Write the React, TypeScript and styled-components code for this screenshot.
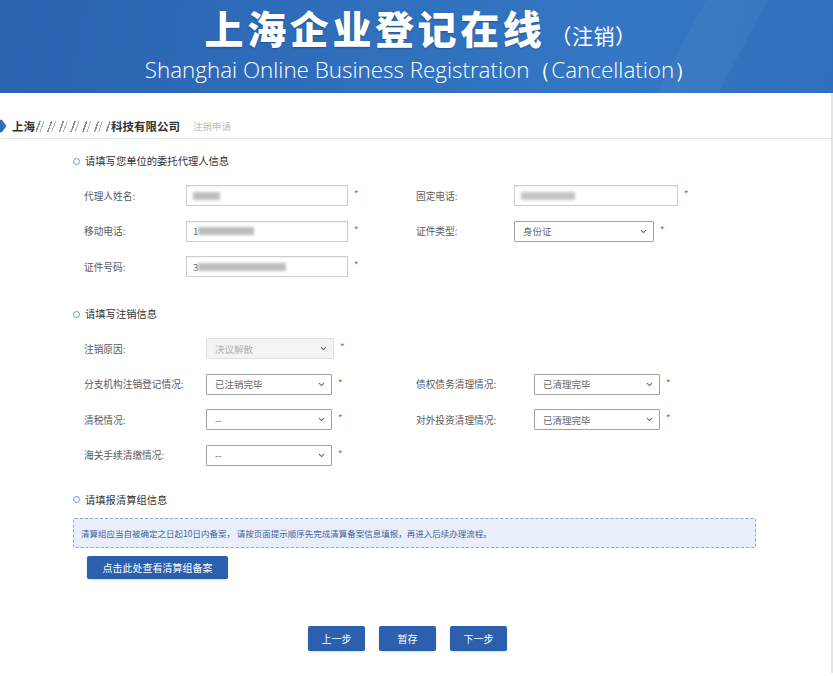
import styled, { createGlobalStyle } from 'styled-components';

const GlobalStyle = createGlobalStyle`
  html, body {
    margin: 0;
    padding: 0;
    background: #ffffff;
  }
  body {
    font-family: "Noto Sans CJK SC", "Noto Sans", "Liberation Sans", sans-serif;
    color: #555;
  }
`;

const Page = styled.div`
  width: 833px;
  min-height: 676px;
  box-sizing: border-box;
`;

const Header = styled.header`
  height: 93px;
  box-sizing: border-box;
  padding: 2px 0 0 8px;
  display: flex;
  flex-direction: column;
  align-items: center;
  color: #fff;
  background:
    linear-gradient(118deg, transparent 0 80%, rgba(255, 255, 255, 0.035) 80% 87%, transparent 87%),
    linear-gradient(100deg, #2a62b0 0%, #3070bd 45%, #3477c4 75%, #2f6fbc 100%);
`;

const TitleLine = styled.div`
  display: flex;
  align-items: baseline;
  line-height: 50px;
`;

const Title = styled.h1`
  margin: 0;
  font-size: 39px;
  font-weight: 900;
  letter-spacing: 3.6px;
  text-shadow: 0 1px 2px rgba(0, 0, 0, 0.25);
`;

const TitleNote = styled.span`
  margin-left: 5px;
  font-size: 21px;
  letter-spacing: 0.5px;
`;

const Subtitle = styled.div`
  font-family: "Open Sans", "Noto Sans", sans-serif;
  font-weight: 300;
  font-size: 22.4px;
  line-height: 30px;
  margin-top: -5px;
`;

const Body = styled.div`
  border-right: 2px solid #e4e4e4;
  padding-bottom: 22px;
`;

const Crumbs = styled.nav`
  height: 46px;
  box-sizing: border-box;
  border-bottom: 1px solid #e3e3e3;
  padding-top: 21px;
  display: flex;
  align-items: center;
  line-height: 14px;
`;

const CrumbMark = styled.svg`
  width: 7px;
  height: 14px;
  margin-right: 5px;
  flex: none;
`;

const Company = styled.span`
  display: flex;
  align-items: center;
  font-size: 11.5px;
  font-weight: 700;
  color: #333;
`;

/* the company name is masked in the screenshot: a smear of grey slashes */
const Smudge = styled.span`
  display: inline-block;
  width: 74px;
  height: 11px;
  margin: 0 1px;
  background: repeating-linear-gradient(
    110deg,
    transparent 0 3px,
    #8f8f8f 3px 4.5px,
    transparent 4.5px 7px,
    #b5b5b5 7px 8px,
    transparent 8px 11px
  );
  filter: blur(0.7px);
`;

const CrumbCurrent = styled.span`
  margin-left: 13px;
  font-size: 9.5px;
  color: #bdbdbd;
`;

const Section = styled.section<{ $top: number }>`
  margin-top: ${(p) => p.$top}px;
`;

const SectionTitle = styled.h3`
  margin: 0;
  padding-left: 73px;
  display: flex;
  align-items: center;
  gap: 5px;
  font-size: 10.3px;
  line-height: 14px;
  font-weight: 400;
  color: #333;
`;

const Dot = styled.span`
  width: 5px;
  height: 5px;
  border: 1px solid #6b96d6;
  border-radius: 50%;
`;

const Rows = styled.div`
  display: grid;
  row-gap: 14.5px;
  margin-top: 17px;
  padding-left: 84px;
`;

const Row = styled.div`
  display: flex;
  height: 21px;
`;

const Cell = styled.div<{ $w?: number }>`
  display: flex;
  align-items: center;
  flex: none;
  width: ${(p) => (p.$w ? `${p.$w}px` : 'auto')};
`;

const Label = styled.span<{ $w: number }>`
  width: ${(p) => p.$w}px;
  flex: none;
  font-size: 9.7px;
  color: #5a5a5a;
  white-space: nowrap;
`;

const TextBox = styled.div<{ $w: number }>`
  width: ${(p) => p.$w}px;
  height: 21px;
  box-sizing: border-box;
  border: 1px solid #cdcdcd;
  box-shadow: inset 0 1px 1px rgba(0, 0, 0, 0.05);
  display: flex;
  align-items: center;
  padding: 0 6px;
  font-size: 9.5px;
  color: #666;
`;

const SelectBox = styled.div<{ $w: number; $disabled?: boolean }>`
  width: ${(p) => p.$w}px;
  height: 21px;
  box-sizing: border-box;
  border: 1px solid ${(p) => (p.$disabled ? '#e1e1e1' : '#a2a2a2')};
  background: ${(p) => (p.$disabled ? '#f3f3f3' : '#fff')};
  color: ${(p) => (p.$disabled ? '#b0b0b0' : '#666')};
  border-radius: 1px;
  display: flex;
  align-items: center;
  justify-content: space-between;
  padding: 0 6px 0 8px;
  font-size: 9.5px;
`;

const Chevron = styled.svg`
  width: 7px;
  height: 5px;
`;

const Blur = styled.span<{ $w: number; $tone?: string }>`
  display: inline-block;
  width: ${(p) => p.$w}px;
  height: 8px;
  background: ${(p) => p.$tone ?? '#bdbdbd'};
  filter: blur(1.4px);
`;

const Star = styled.span`
  margin-left: 6px;
  font-size: 10px;
  color: #e24b45;
  align-self: flex-start;
  line-height: 18px;
`;

const Notice = styled.div`
  margin: 11px 75px 0 73px;
  height: 30px;
  box-sizing: border-box;
  border: 1px dashed #95a4c6;
  border-radius: 2px;
  background: #e9effa;
  display: flex;
  align-items: center;
  padding: 0 7px;
  font-size: 8.5px;
  color: #3f5f9c;
  white-space: nowrap;
`;

const BlueButton = styled.button<{ $w: number; $h: number }>`
  width: ${(p) => p.$w}px;
  height: ${(p) => p.$h}px;
  border: none;
  border-radius: 2px;
  background: #2c5fae;
  color: #fff;
  font-family: inherit;
  font-size: 10px;
  padding: 0;
  box-shadow: 0 1px 2px rgba(0, 0, 0, 0.15);
`;

const ArchiveButton = styled(BlueButton)`
  margin: 8px 0 0 87px;
  display: block;
`;

const Footer = styled.div`
  margin-top: 47px;
  padding-right: 16px;
  display: flex;
  justify-content: center;
  gap: 14px;
`;

function Arrow() {
  return (
    <Chevron viewBox="0 0 7 5">
      <path d="M1 1.2 L3.5 3.6 L6 1.2" fill="none" stroke="#666" strokeWidth="1.1" />
    </Chevron>
  );
}

function Select({ w, value, disabled }: { w: number; value: string; disabled?: boolean }) {
  return (
    <SelectBox $w={w} $disabled={disabled}>
      <span>{value}</span>
      <Arrow />
    </SelectBox>
  );
}

export default function App() {
  return (
    <Page>
      <GlobalStyle />
      <Header>
        <TitleLine>
          <Title>上海企业登记在线</Title>
          <TitleNote>（注销）</TitleNote>
        </TitleLine>
        <Subtitle>Shanghai Online Business Registration（Cancellation）</Subtitle>
      </Header>

      <Body>
        <Crumbs>
          <CrumbMark viewBox="0 0 7 14">
            <path d="M0 1 Q1 0 2 1 L6.5 7 L2 13 Q1 14 0 13 Z" fill="#2f6cc0" />
          </CrumbMark>
          <Company>
            <span>上海</span>
            <Smudge />
            <span>科技有限公司</span>
          </Company>
          <CrumbCurrent>注销申请</CrumbCurrent>
        </Crumbs>

        <Section $top={15}>
          <SectionTitle>
            <Dot />
            请填写您单位的委托代理人信息
          </SectionTitle>
          <Rows>
            <Row>
              <Cell $w={332}>
                <Label $w={102}>代理人姓名:</Label>
                <TextBox $w={162}>
                  <Blur $w={27} />
                </TextBox>
                <Star>*</Star>
              </Cell>
              <Cell>
                <Label $w={98}>固定电话:</Label>
                <TextBox $w={164}>
                  <Blur $w={54} $tone="#c4c4c4" />
                </TextBox>
                <Star>*</Star>
              </Cell>
            </Row>
            <Row>
              <Cell $w={332}>
                <Label $w={102}>移动电话:</Label>
                <TextBox $w={162}>
                  1<Blur $w={56} />
                </TextBox>
                <Star>*</Star>
              </Cell>
              <Cell>
                <Label $w={98}>证件类型:</Label>
                <Select w={140} value="身份证" />
                <Star>*</Star>
              </Cell>
            </Row>
            <Row>
              <Cell $w={332}>
                <Label $w={102}>证件号码:</Label>
                <TextBox $w={162}>
                  3<Blur $w={88} />
                </TextBox>
                <Star>*</Star>
              </Cell>
            </Row>
          </Rows>
        </Section>

        <Section $top={30}>
          <SectionTitle>
            <Dot />
            请填写注销信息
          </SectionTitle>
          <Rows>
            <Row>
              <Cell $w={332}>
                <Label $w={122}>注销原因:</Label>
                <Select w={128} value="决议解散" disabled />
                <Star>*</Star>
              </Cell>
            </Row>
            <Row>
              <Cell $w={332}>
                <Label $w={122}>分支机构注销登记情况:</Label>
                <Select w={126} value="已注销完毕" />
                <Star>*</Star>
              </Cell>
              <Cell>
                <Label $w={118}>债权债务清理情况:</Label>
                <Select w={126} value="已清理完毕" />
                <Star>*</Star>
              </Cell>
            </Row>
            <Row>
              <Cell $w={332}>
                <Label $w={122}>清税情况:</Label>
                <Select w={126} value="--" />
                <Star>*</Star>
              </Cell>
              <Cell>
                <Label $w={118}>对外投资清理情况:</Label>
                <Select w={126} value="已清理完毕" />
                <Star>*</Star>
              </Cell>
            </Row>
            <Row>
              <Cell $w={332}>
                <Label $w={122}>海关手续清缴情况:</Label>
                <Select w={126} value="--" />
                <Star>*</Star>
              </Cell>
            </Row>
          </Rows>
        </Section>

        <Section $top={27}>
          <SectionTitle>
            <Dot />
            请填报清算组信息
          </SectionTitle>
          <Notice>
            清算组应当自被确定之日起10日内备案， 请按页面提示顺序先完成清算备案信息填报，再进入后续办理流程。
          </Notice>
          <ArchiveButton $w={141} $h={23}>
            点击此处查看清算组备案
          </ArchiveButton>
        </Section>

        <Footer>
          <BlueButton $w={57} $h={25}>上一步</BlueButton>
          <BlueButton $w={57} $h={25}>暂存</BlueButton>
          <BlueButton $w={57} $h={25}>下一步</BlueButton>
        </Footer>
      </Body>
    </Page>
  );
}
